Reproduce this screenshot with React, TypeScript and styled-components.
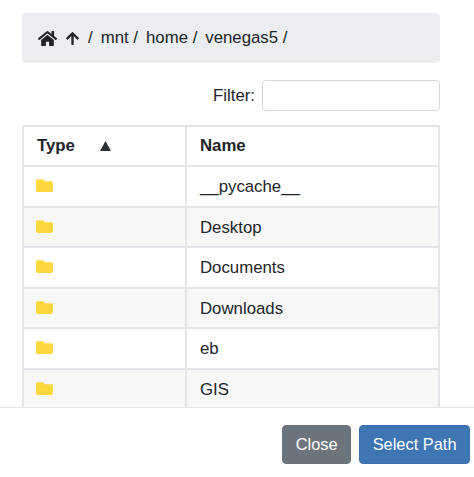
import React from "react";
import styled, { createGlobalStyle } from "styled-components";
import { FaArrowUp, FaFolder, FaHome } from "react-icons/fa";

const folders = ["__pycache__", "Desktop", "Documents", "Downloads", "eb", "GIS"];
const crumbs = ["mnt", "home", "venegas5"];

const GlobalStyle = createGlobalStyle`
  html, body {
    margin: 0;
    height: 100%;
    background: #fff;
    overflow: hidden;
  }
  body {
    font-family: "Liberation Sans", Arial, sans-serif;
    font-size: 16.8px;
    color: #212529;
  }
`;

const Modal = styled.div`
  display: flex;
  flex-direction: column;
  height: 477px;
`;

const ModalBody = styled.div`
  flex: 0 0 407px;
  padding: 13px 34px 0 22px;
  box-sizing: border-box;
  overflow: hidden;
`;

const Breadcrumb = styled.nav`
  display: flex;
  align-items: center;
  height: 50px;
  padding: 0 16px;
  box-sizing: border-box;
  background: #ebedf0;
  border-radius: 4px;
`;

const IconLink = styled.span`
  display: inline-flex;
  color: #212529;
  & + & {
    margin-left: 8px;
  }
`;

const Crumb = styled.span`
  margin-left: 8px;
  white-space: pre;
`;

const FilterRow = styled.div`
  display: flex;
  justify-content: flex-end;
  align-items: center;
  gap: 7px;
  margin: 17px 0 14px;
`;

const FilterInput = styled.input`
  width: 178px;
  height: 31px;
  padding: 0 8px;
  box-sizing: border-box;
  background: #fff;
  border: 1px solid #d3d6da;
  border-radius: 4px;
`;

const Table = styled.table`
  width: 418px;
  table-layout: fixed;
  border-collapse: collapse;
  border: 2px solid #e3e5e8;
`;

const HeadCell = styled.th<{ $width?: number }>`
  width: ${(p) => (p.$width ? `${p.$width}px` : "auto")};
  height: 40px;
  padding: 0 13px;
  box-sizing: border-box;
  border: 2px solid #e3e5e8;
  font-weight: 700;
  text-align: left;
`;

const HeadLabel = styled.div`
  display: flex;
  align-items: center;
`;

const SortArrow = styled.svg`
  width: 11px;
  height: 10px;
  margin-left: 25px;
  fill: #2b2f33;
`;

const Row = styled.tr<{ $striped: boolean }>`
  background: ${(p) => (p.$striped ? "#f7f7f7" : "#fff")};
`;

const Cell = styled.td`
  height: 40.5px;
  padding: 0 13px;
  box-sizing: border-box;
  border: 2px solid #e3e5e8;
`;

const NameCell = styled(Cell)`
  padding-top: 2px;
`;

const FolderIcon = styled(FaFolder)`
  display: block;
  margin: -1px 0 0 -1px;
  color: #ffd83f;
  font-size: 17px;
`;

const ModalFooter = styled.footer`
  flex: 1;
  display: flex;
  justify-content: flex-end;
  gap: 8px;
  padding: 17px 4px 0 0;
  border-top: 1px solid #e3e5e8;
`;

const Button = styled.button<{ $primary?: boolean }>`
  height: 39px;
  padding: 0 12.5px;
  color: #fff;
  background: ${(p) => (p.$primary ? "#3e76b4" : "#6c757d")};
  border: 1px solid ${(p) => (p.$primary ? "#3a70ac" : "#6c757d")};
  border-radius: 4px;
  font: inherit;
  font-size: 16.4px;
`;

export default function App() {
  return (
    <>
      <GlobalStyle />
      <Modal>
        <ModalBody>
          <Breadcrumb>
            <IconLink>
              <FaHome size={19} />
            </IconLink>
            <IconLink>
              <FaArrowUp size={15} />
            </IconLink>
            <Crumb>/</Crumb>
            {crumbs.map((name) => (
              <Crumb key={name}>{name} /</Crumb>
            ))}
          </Breadcrumb>
          <FilterRow>
            <label htmlFor="filter">Filter:</label>
            <FilterInput id="filter" type="text" />
          </FilterRow>
          <Table>
            <thead>
              <tr>
                <HeadCell $width={163}>
                  <HeadLabel>
                    Type
                    <SortArrow viewBox="0 0 11 10">
                      <polygon points="5.5,0 11,10 0,10" />
                    </SortArrow>
                  </HeadLabel>
                </HeadCell>
                <HeadCell>Name</HeadCell>
              </tr>
            </thead>
            <tbody>
              {folders.map((name, i) => (
                <Row key={name} $striped={i % 2 === 1}>
                  <Cell>
                    <FolderIcon />
                  </Cell>
                  <NameCell>{name}</NameCell>
                </Row>
              ))}
            </tbody>
          </Table>
        </ModalBody>
        <ModalFooter>
          <Button>Close</Button>
          <Button $primary>Select Path</Button>
        </ModalFooter>
      </Modal>
    </>
  );
}
